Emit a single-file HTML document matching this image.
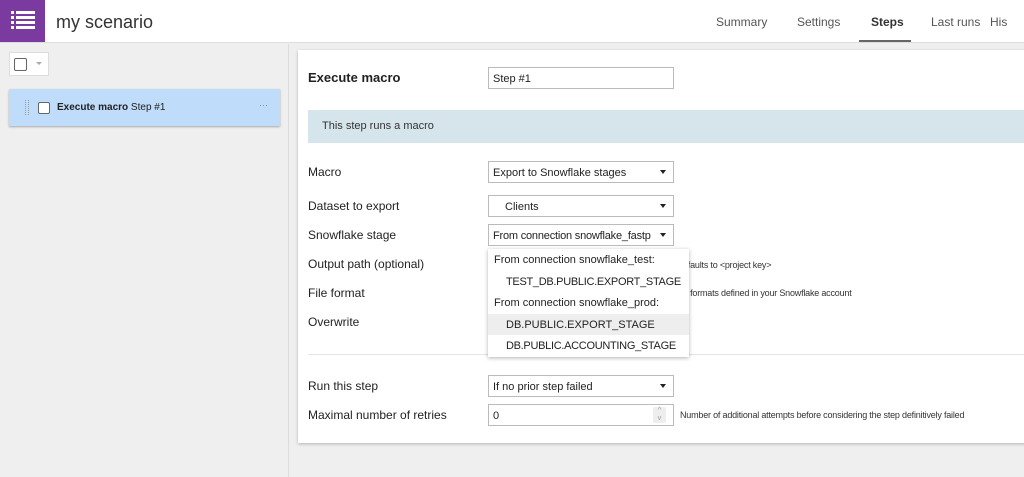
<!DOCTYPE html>
<html><head><style>
*{box-sizing:border-box;margin:0;padding:0}
body{width:1024px;height:477px;overflow:hidden;background:#efefef;font-family:"Liberation Sans",sans-serif;color:#333;position:relative}
.a{position:absolute}
.top{left:0;top:0;width:1024px;height:43px;background:#fff;border-bottom:1px solid #ddd}
.logo{left:0;top:0;width:45px;height:42px;background:#7a3a9f}
.tab{top:15px;font-size:12px;color:#555}
.lbl{left:308px;font-size:12px;color:#222}
.inp{left:488px;width:186px;height:22px;border:1px solid #bbb;background:#fff;font-size:11px;padding:5px 0 0 4px;color:#222}
.sel:after{content:"";position:absolute;right:7px;top:8px;border:3.5px solid transparent;border-top:4px solid #222;border-bottom:0}
.note{font-size:9px;color:#333;letter-spacing:-0.2px}
.dd div{height:21.5px;font-size:11px;padding:5px 6px;color:#222;white-space:nowrap}
</style></head><body>
<div class="a top"></div>
<div class="a logo"><svg width="45" height="42"><g fill="#fff"><rect x="11" y="11" width="3" height="3"/><rect x="16" y="11" width="19" height="3"/><rect x="11" y="16" width="3" height="3"/><rect x="16" y="16" width="19" height="3"/><rect x="11" y="21" width="3" height="3"/><rect x="16" y="21" width="19" height="3"/><rect x="11" y="26" width="3" height="3"/><rect x="16" y="26" width="19" height="3"/></g></svg></div>
<div class="a" style="left:56px;top:12px;font-size:18px;color:#333">my scenario</div>
<div class="a tab" style="left:716px">Summary</div>
<div class="a tab" style="left:797px">Settings</div>
<div class="a tab" style="left:871px;font-weight:bold;color:#333">Steps</div>
<div class="a" style="left:859px;top:40px;width:52px;height:2px;background:#666"></div>
<div class="a tab" style="left:931px">Last runs</div>
<div class="a tab" style="left:990px">His</div>
<div class="a" style="left:288px;top:44px;width:1px;height:433px;background:#ddd"></div>
<div class="a" style="left:9px;top:52px;width:40px;height:24px;background:#fff;border:1px solid #ddd"></div>
<div class="a" style="left:14px;top:58px;width:13px;height:13px;border:1.5px solid #666;border-radius:2px"></div>
<div class="a" style="left:36px;top:62px;border:3px solid transparent;border-top:3px solid #aaa"></div>
<div class="a" style="left:9px;top:89px;width:271px;height:37px;background:#bfdcfb;box-shadow:0 1px 2px rgba(0,0,0,.3)"></div>
<div class="a" style="left:25px;top:100px;width:4px;height:15px;border-left:1px dotted #999;border-right:1px dotted #999"></div>
<div class="a" style="left:38px;top:102px;width:12px;height:12px;border:1.5px solid #666;background:#fff;border-radius:2px"></div>
<div class="a" style="left:57px;top:102px;font-size:10px;color:#222"><b>Execute macro</b> Step #1</div>
<div class="a" style="left:259px;top:100px;font-size:9px;color:#888">···</div>
<div class="a" style="left:298px;top:50px;width:730px;height:393px;background:#fff;box-shadow:0 1px 3px rgba(0,0,0,.25)"></div>
<div class="a" style="left:308px;top:70px;font-size:13px;font-weight:bold;color:#222">Execute macro</div>
<div class="a inp" style="top:67px">Step #1</div>
<div class="a" style="left:308px;top:110px;width:716px;height:33px;background:#d6e5ec"></div>
<div class="a" style="left:322px;top:120px;font-size:11px;color:#333">This step runs a macro</div>
<div class="a lbl" style="top:165px">Macro</div>
<div class="a inp sel" style="top:161px">Export to Snowflake stages</div>
<div class="a lbl" style="top:199px">Dataset to export</div>
<div class="a inp sel" style="top:195px;padding-left:16px">Clients</div>
<div class="a lbl" style="top:228px">Snowflake stage</div>
<div class="a inp sel" style="top:224px;overflow:hidden;white-space:nowrap;padding-right:22px;letter-spacing:-0.2px">From connection snowflake_fastp</div>
<div class="a lbl" style="top:257px">Output path (optional)</div>
<div class="a lbl" style="top:286px">File format</div>
<div class="a lbl" style="top:315px">Overwrite</div>
<div class="a note" style="left:683px;top:260px">efaults to &lt;project key&gt;</div>
<div class="a note" style="left:683px;top:288px">e formats defined in your Snowflake account</div>
<div class="a" style="left:308px;top:354px;width:716px;height:1px;background:#e4e4e4"></div>
<div class="a dd" style="left:488px;top:249px;width:201px;height:108px;background:#fff;box-shadow:0 1px 4px rgba(0,0,0,.3);overflow:hidden">
<div>From connection snowflake_test:</div>
<div style="padding-left:18px;letter-spacing:-0.3px">TEST_DB.PUBLIC.EXPORT_STAGE</div>
<div>From connection snowflake_prod:</div>
<div style="padding-left:18px;background:#eee">DB.PUBLIC.EXPORT_STAGE</div>
<div style="padding-left:18px;letter-spacing:-0.3px">DB.PUBLIC.ACCOUNTING_STAGE</div>
</div>
<div class="a lbl" style="top:379px">Run this step</div>
<div class="a inp sel" style="top:375px">If no prior step failed</div>
<div class="a lbl" style="top:408px">Maximal number of retries</div>
<div class="a inp" style="top:404px">0</div>
<div class="a" style="left:653px;top:407px;width:13px;height:16px;background:#eee;border-radius:2px;font-size:7px;color:#999;text-align:center;line-height:8px">^<br>v</div>
<div class="a note" style="left:680px;top:410px">Number of additional attempts before considering the step definitively failed</div>
</body></html>
